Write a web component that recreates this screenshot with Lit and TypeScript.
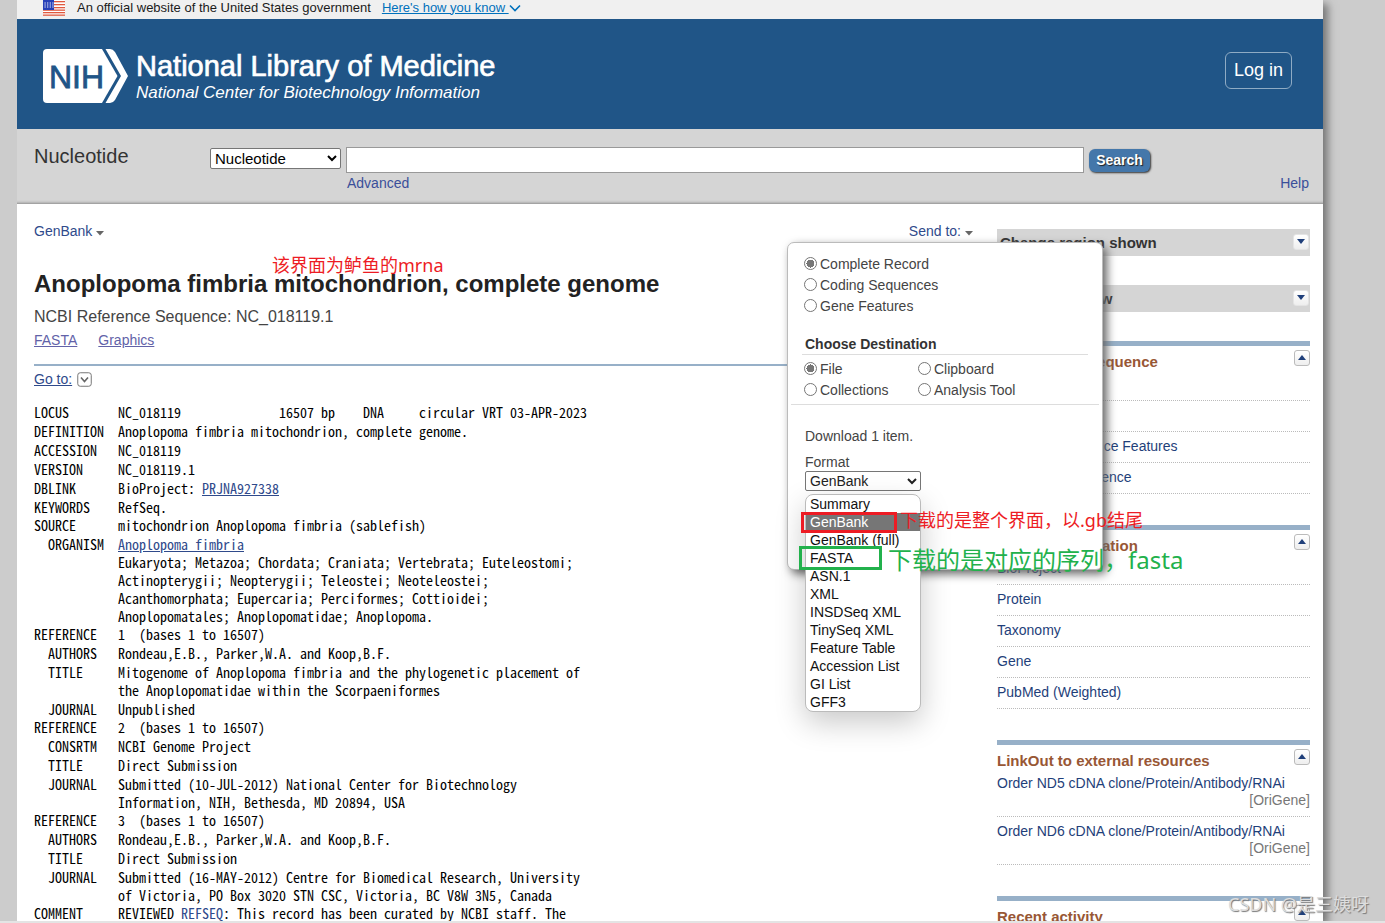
import { LitElement, html, css, svg, nothing } from "lit";
import { customElement, property } from "lit/decorators.js";

interface Field {
  key: string;
  sub?: boolean;
  lines: unknown[];
}

const RECORD: Field[][] = [
  [
    { key: "LOCUS", lines: ["NC_018119              16507 bp    DNA     circular VRT 03-APR-2023"] },
    { key: "DEFINITION", lines: ["Anoplopoma fimbria mitochondrion, complete genome."] },
    { key: "ACCESSION", lines: ["NC_018119"] },
    { key: "VERSION", lines: ["NC_018119.1"] },
    { key: "DBLINK", lines: [html`BioProject: <a href="#bioproject">PRJNA927338</a>`] },
    { key: "KEYWORDS", lines: ["RefSeq."] },
  ],
  [
    { key: "SOURCE", lines: ["mitochondrion Anoplopoma fimbria (sablefish)"] },
    {
      key: "ORGANISM",
      sub: true,
      lines: [
        html`<a href="#taxonomy">Anoplopoma fimbria</a>`,
        "Eukaryota; Metazoa; Chordata; Craniata; Vertebrata; Euteleostomi;",
        "Actinopterygii; Neopterygii; Teleostei; Neoteleostei;",
        "Acanthomorphata; Eupercaria; Perciformes; Cottioidei;",
        "Anoplopomatales; Anoplopomatidae; Anoplopoma.",
      ],
    },
  ],
  [
    { key: "REFERENCE", lines: ["1  (bases 1 to 16507)"] },
    { key: "AUTHORS", sub: true, lines: ["Rondeau,E.B., Parker,W.A. and Koop,B.F."] },
    {
      key: "TITLE",
      sub: true,
      lines: [
        "Mitogenome of Anoplopoma fimbria and the phylogenetic placement of",
        "the Anoplopomatidae within the Scorpaeniformes",
      ],
    },
    { key: "JOURNAL", sub: true, lines: ["Unpublished"] },
  ],
  [
    { key: "REFERENCE", lines: ["2  (bases 1 to 16507)"] },
    { key: "CONSRTM", sub: true, lines: ["NCBI Genome Project"] },
    { key: "TITLE", sub: true, lines: ["Direct Submission"] },
    {
      key: "JOURNAL",
      sub: true,
      lines: [
        "Submitted (10-JUL-2012) National Center for Biotechnology",
        "Information, NIH, Bethesda, MD 20894, USA",
      ],
    },
  ],
  [
    { key: "REFERENCE", lines: ["3  (bases 1 to 16507)"] },
    { key: "AUTHORS", sub: true, lines: ["Rondeau,E.B., Parker,W.A. and Koop,B.F."] },
    { key: "TITLE", sub: true, lines: ["Direct Submission"] },
    {
      key: "JOURNAL",
      sub: true,
      lines: [
        "Submitted (16-MAY-2012) Centre for Biomedical Research, University",
        "of Victoria, PO Box 3020 STN CSC, Victoria, BC V8W 3N5, Canada",
      ],
    },
  ],
  [
    {
      key: "COMMENT",
      lines: [html`REVIEWED <a class="plain" href="#refseq">REFSEQ</a>: This record has been curated by NCBI staff. The`],
    },
  ],
];

const FORMATS = [
  "Summary", "GenBank", "GenBank (full)", "FASTA", "ASN.1", "XML",
  "INSDSeq XML", "TinySeq XML", "Feature Table", "Accession List", "GI List", "GFF3",
];

const linkReset = css`
  a { color: inherit; text-decoration: none; }
`;

@customElement("gb-header")
class GbHeader extends LitElement {
  static styles = [
    linkReset,
    css`
      :host { display: block; }
      .gov { display: flex; align-items: center; height: 19px; padding: 0 26px; background: #f0f0f0; font-size: 13px; line-height: 16px; color: #1b1b1b; }
      .gov-in { display: flex; align-items: center; padding-bottom: 4px; }
      .flag { margin-right: 12px; }
      .how { display: flex; align-items: center; margin-left: 11px; color: #0071bc; }
      .how span { text-decoration: underline; white-space: pre; }
      .brand { display: flex; align-items: center; justify-content: space-between; height: 110px; padding: 0 31px 0 26px; background: #205587; }
      .logo { display: block; margin-top: 4px; }
      .login { height: 37px; padding: 0 8px; margin-bottom: 8px; border: 1px solid #8fabc4; border-radius: 6px; background: none; color: #fff; font: 18px "Liberation Sans", Arial, sans-serif; }
    `,
  ];

  render() {
    return html`
      <div class="gov">
        <div class="gov-in">
          <svg class="flag" width="22" height="16" viewBox="0 0 22 16" aria-hidden="true">
            <rect width="22" height="16" fill="#fff" />
            ${[1, 4, 7, 9.5, 12, 14.5].map((y) => svg`<rect y=${y} width="22" height="1.3" fill="#e0593f" />`)}
            <rect width="11" height="10" fill="#2740b8" />
            ${[3, 5, 7].map((y) => svg`<path d="M1.500 ${y}h9" stroke="#fff" stroke-width="1" stroke-dasharray="1.200 1.400" />`)}
          </svg>
          <span>An official website of the United States government</span>
          <a class="how" href="#how"><span>Here's how you know </span>
            <svg width="12" height="8" viewBox="0 0 12 8" aria-hidden="true"><path d="M1 1.5 6 6.5 11 1.5" fill="none" stroke="#0071bc" stroke-width="1.6" /></svg>
          </a>
        </div>
      </div>
      <div class="brand">
        <a href="#home" aria-label="NCBI home">
          <svg class="logo" width="470" height="56" viewBox="0 0 470 56" font-family="Liberation Sans, Arial, sans-serif">
            <path d="M4 1H59L74.500 28 59 55H4a4 4 0 0 1-4-4V5a4 4 0 0 1 4-4Z" fill="#fff" />
            <path d="M62.500 1H67Q70 1 72 4L85 28 72 52Q70 55 67 55H62.500L78 28Z" fill="#fff" />
            <text x="6" y="40" font-size="32" fill="#205587" stroke="#205587" stroke-width=".8">NIH</text>
            <text x="93" y="28" font-size="29" fill="#fff" stroke="#fff" stroke-width=".7">National Library of Medicine</text>
            <text x="93" y="50" font-size="17" font-style="italic" fill="#fff">National Center for Biotechnology Information</text>
          </svg>
        </a>
        <button class="login">Log in</button>
      </div>
    `;
  }
}

@customElement("gb-search")
class GbSearch extends LitElement {
  static styles = [
    linkReset,
    css`
      :host { display: block; height: 75px; background: #d5d5d5; box-shadow: inset 0 -4px 3px -3px #888; color: #3a4f9a; font-size: 14px; }
      .bar { display: grid; grid-template-columns: 171px 131px minmax(0, 738px) 61px; column-gap: 5px; height: 26px; padding: 17px 14px 0 17px; align-items: center; }
      .db { color: #333; font-size: 20px; line-height: 20px; margin: 0 0 8px; font-weight: 400; }
      select { width: 131px; margin: 0 0 4px; height: 21px; border: 1px solid #767676; border-radius: 2px; background: #fff; font: 15px "Liberation Sans", Arial, sans-serif; padding: 0; color: #000; }
      .term { box-sizing: border-box; width: 100%; height: 26px; border: 1px solid #999; padding: 2px 4px; font: 15px "Liberation Sans", Arial, sans-serif; }
      .go { height: 23px; padding: 0; border: 0; border-radius: 6px; background: #4477aa; color: #fff; font: bold 14px "Liberation Sans", Arial, sans-serif; text-shadow: 1px 1px 1px #222; box-shadow: 1px 1px 2px #333; }
      .links { display: flex; justify-content: space-between; padding: 3px 14px 0 330px; line-height: 16px; }
    `,
  ];

  render() {
    return html`
      <form class="bar" @submit=${(e: Event) => e.preventDefault()}>
        <h2 class="db">Nucleotide</h2>
        <select aria-label="Database"><option>Nucleotide</option></select>
        <input class="term" type="text" aria-label="Search term" />
        <button class="go">Search</button>
      </form>
      <div class="links"><a href="#advanced">Advanced</a><a href="#help">Help</a></div>
    `;
  }
}

@customElement("gb-record")
class GbRecord extends LitElement {
  static styles = [
    linkReset,
    css`
      :host { display: block; }
      .top { display: flex; justify-content: space-between; font-size: 14px; line-height: 18px; color: #2f4a8b; padding-right: 1px; }
      .menu { display: flex; align-items: center; gap: 4px; }
      .menu svg { margin-top: 4px; }
      h1 { margin: 29px 0 0; font-size: 24px; line-height: 30px; color: #222; }
      .ref { margin: 8px 0 0; font-size: 16px; line-height: 20px; color: #444; }
      .views { display: flex; gap: 21px; margin-top: 4px; font-size: 14px; line-height: 18px; color: #6262a8; }
      .views a, .goto a { text-decoration: underline; }
      .goto { display: flex; align-items: center; gap: 5px; margin-top: 15px; padding-top: 3px; border-top: 2px solid #97b0c8; font-size: 14px; line-height: 20px; color: #2f4a8b; }
      .record { margin-top: 14px; font: 14px/18px "Noto Sans CJK SC", "Liberation Mono", monospace; font-feature-settings: "hwid"; font-variant-ligatures: none; color: #000; white-space: pre; }
      .group { display: flex; flex-direction: column; gap: 1px; }
      .field { display: grid; grid-template-columns: 84px 1fr; }
      .sub { padding-left: 14px; }
      .record a { color: #2f4a8b; text-decoration: underline; }
      .record a.plain { text-decoration: none; }
    `,
  ];

  private caret() {
    return html`<svg width="8" height="5" viewBox="0 0 8 5" aria-hidden="true"><path d="M0 0h8L4 4.500Z" fill="#666" /></svg>`;
  }

  render() {
    return html`
      <div class="top">
        <a class="menu" href="#format">GenBank${this.caret()}</a>
        <a class="menu" href="#send">Send to:${this.caret()}</a>
      </div>
      <h1>Anoplopoma fimbria mitochondrion, complete genome</h1>
      <p class="ref">NCBI Reference Sequence: NC_018119.1</p>
      <div class="views"><a href="#fasta">FASTA</a><a href="#graphics">Graphics</a></div>
      <div class="goto">
        <a href="#goto">Go to:</a>
        <svg width="15" height="15" viewBox="0 0 15 15" aria-hidden="true">
          <rect x=".75" y=".75" width="13.500" height="13.500" rx="2.500" fill="#fff" stroke="#777" />
          <path d="M4 5.500 7.500 9.500 11 5.500" fill="none" stroke="#666" stroke-width="1.600" />
        </svg>
      </div>
      <div class="record">${RECORD.map(
        (group) => html`<div class="group">${group.map(
          (f) => html`<div class="field"><span class=${f.sub ? "sub" : nothing}>${f.key}</span><div>${f.lines.map((l) => html`<div>${l}</div>`)}</div></div>`,
        )}</div>`,
      )}</div>
    `;
  }
}

@customElement("gb-portlet")
class GbPortlet extends LitElement {
  @property() heading = "";
  @property({ type: Boolean, reflect: true }) closed = false;
  @property({ attribute: false }) items: string[] = [];
  @property() source = "";

  static styles = [
    linkReset,
    css`
      :host { display: block; border-top: 5px solid #97b0c8; margin-bottom: 31px; font-size: 14px; color: #1f3f7a; }
      :host([closed]) { border-top: 0; background: #d5d5d5; margin-bottom: 29px; }
      .head { display: flex; justify-content: space-between; height: 24px; }
      :host([closed]) .head { height: 27px; padding: 0 1px 0 3px; }
      h3 { margin: 7px 0 0; font-size: 15px; line-height: 18px; color: #985735; white-space: nowrap; }
      :host([closed]) h3 { margin-top: 5px; color: #333; }
      .toggle { width: 16px; height: 16px; margin-top: 4px; padding: 0 0 1px; border: 1px solid #bbb; border-radius: 3px; background: linear-gradient(#fff, #eee); display: grid; place-items: center; }
      :host([closed]) .toggle { margin-top: 5px; border-color: #e4e4e4; }
      ul { list-style: none; margin: 0; padding: 0; }
      li { border-bottom: 1px dotted #bbb; line-height: 17px; padding: 6px 0 7px; }
      .src { color: #777; text-align: right; }
    `,
  ];

  render() {
    return html`
      <div class="head">
        <h3>${this.heading}</h3>
        <button class="toggle" aria-label="Toggle ${this.heading}">
          <svg width="8" height="5" viewBox="0 0 8 5"><path d=${this.closed ? "M0 0h8L4 5Z" : "M0 5h8L4 0Z"} fill="#1f3f7a" /></svg>
        </button>
      </div>
      ${this.items.length
        ? html`<ul>${this.items.map(
            (item) => html`<li><a href="#item">${item}</a>${this.source ? html`<div class="src">${this.source}</div>` : nothing}</li>`,
          )}</ul>`
        : nothing}
    `;
  }
}

@customElement("gb-send-menu")
class GbSendMenu extends LitElement {
  static styles = css`
    :host { display: block; box-sizing: border-box; width: 316px; height: 328px; padding: 11px 3px 0; border: 1px solid #bbb; border-radius: 7px; background: #fff; box-shadow: 4px 4px 10px #666; font-size: 14px; color: #444; }
    .group { padding: 0 12px; }
    .two { display: grid; grid-template-columns: 114px 1fr; padding-top: 4px; padding-bottom: 3px; border-bottom: 1px solid #ddd; }
    label { display: flex; align-items: center; line-height: 21px; white-space: nowrap; }
    input { appearance: none; box-sizing: border-box; width: 13px; height: 13px; margin: 0 3px 2px 1px; border: 1px solid #767676; border-radius: 50%; background: #fff; }
    input:checked { background: radial-gradient(circle, #767676 0 4px, #fff 4px); }
    h4 { margin: 17px 11px 0; padding: 0 3px; border-bottom: 1px solid #ddd; font-size: 14px; line-height: 20px; color: #333; }
    .dl { padding: 0 14px; }
    p { margin: 22px 0 0; line-height: 18px; }
    .fmt { display: block; margin-top: 8px; line-height: 18px; }
    select { display: block; width: 116px; height: 20px; border: 1px solid #767676; border-radius: 2px; background: #fff; padding: 0; color: #222; font: 14px "Liberation Sans", Arial, sans-serif; }
    .list { position: absolute; left: 17px; top: 251px; box-sizing: border-box; width: 116px; margin: 0; padding: 0; list-style: none; border: 1px solid #bbb; border-radius: 8px; overflow: hidden; background: #fff; color: #111; }
    .shade { position: absolute; left: 17px; top: 251px; width: 116px; height: 216px; border-radius: 8px; box-shadow: 0 12px 30px rgba(0, 0, 0, 0.22); }
    .list li { padding-left: 4px; line-height: 18px; white-space: nowrap; }
    .list .on { background: #767676; color: #fff; }
  `;

  private radio(name: string, label: string, checked = false) {
    return html`<label><input type="radio" name=${name} ?checked=${checked} />${label}</label>`;
  }

  render() {
    return html`
      <div class="group">
        ${this.radio("part", "Complete Record", true)} ${this.radio("part", "Coding Sequences")} ${this.radio("part", "Gene Features")}
      </div>
      <h4>Choose Destination</h4>
      <div class="group two">
        ${this.radio("dest", "File", true)} ${this.radio("dest", "Clipboard")} ${this.radio("dest", "Collections")} ${this.radio("dest", "Analysis Tool")}
      </div>
      <div class="dl">
        <p>Download 1 item.</p>
        <label class="fmt" for="fmt">Format</label>
        <select id="fmt"><option>GenBank</option></select>
      </div>
      <div class="shade"></div>
      <ul class="list" role="listbox" aria-label="Format">
        ${FORMATS.map((f) => html`<li role="option" aria-selected=${f === "GenBank"} class=${f === "GenBank" ? "on" : ""}>${f}</li>`)}
      </ul>
    `;
  }
}

@customElement("app-root")
class AppRoot extends LitElement {
  static styles = css`
    :host { display: flex; flex-direction: column; position: relative; height: 100vh; overflow: hidden; background: #ccc; font-family: "Liberation Sans", Arial, sans-serif; }
    .page { flex: 1; min-height: 0; margin: 0 62px 0 17px; background: #fff; box-shadow: 5px 4px 8px #777; clip-path: inset(0 -20px 0 0); }
    .cols { display: grid; grid-template-columns: minmax(0, 1fr) 313px; column-gap: 23px; padding: 0 13px 0 17px; }
    .main { position: relative; padding-top: 18px; }
    .send { position: absolute; right: -129px; top: 38px; z-index: 2; }
    .side { padding-top: 25px; }
    .edge { height: 2px; background: #e4e4e4; position: relative; z-index: 3; }
    .note { position: absolute; z-index: 4; font-family: "Noto Sans", "Noto Sans CJK SC", sans-serif; white-space: nowrap; font-size: 18px; line-height: 24px; color: #ed1c24; }
    .n1 { left: 238px; top: 49px; }
    .n2 { left: 866px; top: 304px; }
    .n3 { left: 854px; top: 340px; font-size: 24px; line-height: 32px; color: #22b14c; }
    .mark { position: absolute; z-index: 4; box-sizing: border-box; border: 3px solid #ed1c24; }
    .m1 { left: 767px; top: 308px; width: 96px; height: 21px; }
    .m2 { left: 765px; top: 342px; width: 83px; height: 24px; border-color: #22b14c; }
    .water { position: absolute; z-index: 5; right: 16px; bottom: 7px; font: 18px/24px "Noto Sans", "Noto Sans CJK SC", sans-serif; color: #ddd; text-shadow: 1px 1px 1px #777; }
  `;

  render() {
    return html`
      <div class="page">
        <gb-header></gb-header>
        <gb-search></gb-search>
        <div class="cols">
          <main class="main">
            <gb-record></gb-record>
            <gb-send-menu class="send"></gb-send-menu>
            <span class="note n1">该界面为鲈鱼的mrna</span>
            <span class="note n2">下载的是整个界面，以.gb结尾</span>
            <span class="note n3">下载的是对应的序列，fasta</span>
            <div class="mark m1"></div>
            <div class="mark m2"></div>
          </main>
          <aside class="side">
            <gb-portlet closed heading="Change region shown"></gb-portlet>
            <gb-portlet closed heading="Customize view"></gb-portlet>
            <gb-portlet heading="Analyze this sequence" .items=${["Run BLAST", "Pick Primers", "Highlight Sequence Features", "Find in this Sequence"]}></gb-portlet>
            <gb-portlet heading="Related information" .items=${["BioProject", "Protein", "Taxonomy", "Gene", "PubMed (Weighted)"]}></gb-portlet>
            <gb-portlet heading="LinkOut to external resources" source="[OriGene]" .items=${["Order ND5 cDNA clone/Protein/Antibody/RNAi", "Order ND6 cDNA clone/Protein/Antibody/RNAi"]}></gb-portlet>
            <gb-portlet heading="Recent activity"></gb-portlet>
          </aside>
        </div>
      </div>
      <div class="edge"></div>
      <div class="water">CSDN @是三姨呀</div>
    `;
  }
}
